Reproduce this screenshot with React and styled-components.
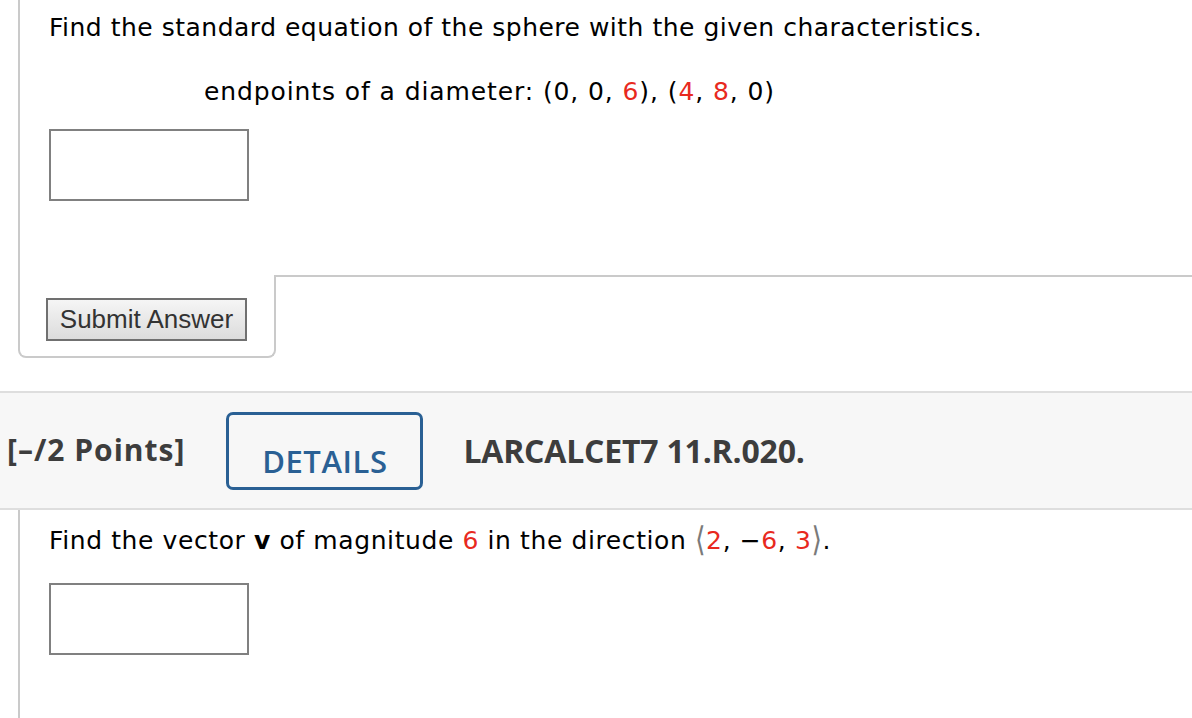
import React from "react";
import styled, { createGlobalStyle } from "styled-components";

const Global = createGlobalStyle`
  html, body { margin: 0; padding: 0; background: #fff; }
  body { font-family: "DejaVu Sans", Verdana, sans-serif; }
`;

const Page = styled.div`
  display: flex;
  flex-direction: column;
  min-height: 718px;
  overflow: hidden;
`;

const QuestionBody = styled.div`
  margin-left: 18px;
  border-left: 2px solid #cacaca;
  padding: ${(p) => p.$pt}px 0 ${(p) => p.$pb}px 29px;
  flex: ${(p) => (p.$grow ? 1 : "none")};
  color: #000;
`;

const Prompt = styled.div`
  font-size: 25px;
  line-height: 29px;
  letter-spacing: ${(p) => p.$ls || 0.5}px;
  white-space: nowrap;
  padding-left: ${(p) => p.$indent || 0}px;
  margin-top: ${(p) => p.$mt || 0}px;
`;

const Red = styled.span`
  color: #e8291e;
`;

const Bold = styled.b`
  font-weight: 700;
`;

const Angle = styled.span`
  color: #7a7a7a;
  font-size: 27px;
  display: inline-block;
  transform: scaleY(1.25);
`;

const AnswerBox = styled.div`
  box-sizing: border-box;
  width: 200px;
  height: 72px;
  border: 2px solid #808080;
  background: #fff;
  margin-top: ${(p) => p.$mt}px;
`;

const SubmitRow = styled.div`
  display: flex;
  margin-left: 18px;
`;

const SubmitTab = styled.div`
  box-sizing: border-box;
  width: 258px;
  border: 2px solid #cacaca;
  border-top: none;
  border-radius: 0 0 8px 8px;
  padding: 23px 0 15px 26px;
`;

const Filler = styled.div`
  flex: 1;
  border-top: 2px solid #cacaca;
`;

const SubmitButton = styled.button`
  box-sizing: border-box;
  width: 201px;
  height: 43px;
  border: 2px solid #707070;
  border-radius: 0;
  background: linear-gradient(#f5f5f5, #dcdcdc);
  font-family: "Liberation Sans", Arial, sans-serif;
  font-size: 26px;
  color: #333;
  padding: 0;
  display: block;
`;

const HeaderBand = styled.div`
  margin-top: 33px;
  box-sizing: border-box;
  height: 119px;
  border-top: 2px solid #dedede;
  border-bottom: 2px solid #dedede;
  background: #f7f7f7;
  display: flex;
  align-items: center;
  padding-left: 7px;
  color: #3d3d3d;
  font-family: "Open Sans", sans-serif;
  font-weight: 700;
`;

const Points = styled.div`
  font-size: 30px;
  letter-spacing: 1px;
  margin-top: -2px;
  white-space: nowrap;
`;

const DetailsButton = styled.div`
  box-sizing: border-box;
  width: 197px;
  height: 78px;
  margin-left: 41px;
  border: 3px solid #2a6094;
  border-radius: 7px;
  color: #2a6094;
  font-size: 31px;
  letter-spacing: 0.6px;
  font-weight: 600;
  line-height: 30px;
  padding-top: 31px;
  text-align: center;
`;

const Reference = styled.div`
  margin-left: 40px;
  font-size: 32px;
  letter-spacing: -0.2px;
  white-space: nowrap;
`;

export default function App() {
  return (
    <Page>
      <Global />
      <QuestionBody $pt={13} $pb={74}>
        <Prompt>Find the standard equation of the sphere with the given characteristics.</Prompt>
        <Prompt $indent={155} $mt={35} $ls={0.9}>
          endpoints of a diameter: (0, 0, <Red>6</Red>), (<Red>4</Red>, <Red>8</Red>, 0)
        </Prompt>
        <AnswerBox $mt={23} />
      </QuestionBody>
      <SubmitRow>
        <SubmitTab>
          <SubmitButton>Submit Answer</SubmitButton>
        </SubmitTab>
        <Filler />
      </SubmitRow>
      <HeaderBand>
        <Points>[–/2 Points]</Points>
        <DetailsButton>DETAILS</DetailsButton>
        <Reference>LARCALCET7 11.R.020.</Reference>
      </HeaderBand>
      <QuestionBody $pt={15} $pb={0} $grow>
        <Prompt $ls={0.6}>
          Find the vector <Bold>v</Bold> of magnitude <Red>6</Red> in the direction{" "}
          <Angle>⟨</Angle>
          <Red>2</Red>, −<Red>6</Red>, <Red>3</Red>
          <Angle>⟩</Angle>.
        </Prompt>
        <AnswerBox $mt={28} />
      </QuestionBody>
    </Page>
  );
}
